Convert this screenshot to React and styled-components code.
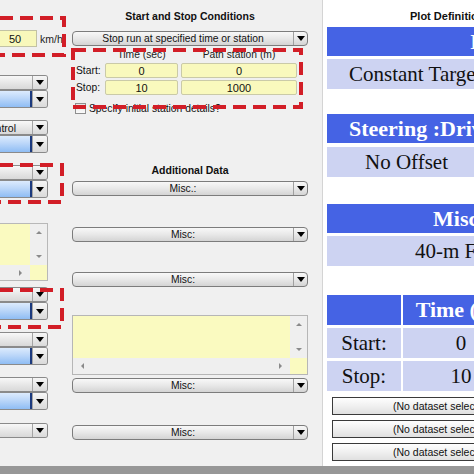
import React from "react";
import styled, { createGlobalStyle } from "styled-components";

const Global = createGlobalStyle`
  html, body { margin: 0; padding: 0; background: #f0f0f0; overflow: hidden; }
  #root { width: 474px; height: 474px; }
`;

const Page = styled.div`
  position: relative;
  width: 474px;
  height: 474px;
  overflow: hidden;
  background: #f0f0f0;
  font-family: "Liberation Sans", Arial, sans-serif;
  font-size: 10px;
  color: #111;
  display: grid;
  grid-template-columns: 72px 250px 152px;
  grid-template-rows: 466px 8px;
`;

const BottomBar = styled.div`
  grid-column: 1 / -1;
  background: #979797;
`;

/* ---------- shared bits ---------- */
const DownArrow = styled.span`
  width: 0;
  height: 0;
  border-left: 4.5px solid transparent;
  border-right: 4.5px solid transparent;
  border-top: 5px solid #000;
`;

const ScrollArrow = styled.span`
  width: 0;
  height: 0;
  border: 3px solid transparent;
  ${(p) =>
    p.$dir === "up"
      ? "border-bottom-color:#8a8a8a; border-top-width:0;"
      : p.$dir === "down"
      ? "border-top-color:#8a8a8a; border-bottom-width:0;"
      : p.$dir === "left"
      ? "border-right-color:#8a8a8a; border-left-width:0;"
      : "border-left-color:#8a8a8a; border-right-width:0;"}
`;

/* ---------- left column ---------- */
const LeftCol = styled.div`
  display: flex;
  flex-direction: column;
  padding-top: 30px;
`;

const SpeedRow = styled.div`
  display: flex;
  align-items: center;
  gap: 3px;
  height: 17px;
`;

const SpeedInput = styled.div`
  width: 37px;
  height: 17px;
  box-sizing: border-box;
  background: #f8f8bb;
  border: 1px solid #c2c2a4;
  border-left: none;
  display: flex;
  align-items: center;
  justify-content: center;
  padding-right: 6px;
  font-size: 11px;
`;

const Unit = styled.span`
  font-size: 10.5px;
  color: #222;
`;

const Pair = styled.div`
  display: flex;
  flex-direction: column;
  margin-top: ${(p) => p.$mt}px;
`;

const Combo = styled.div`
  display: flex;
  width: 48px;
  height: ${(p) => p.$h}px;
  box-sizing: border-box;
  border: 1px solid #8a8a8a;
  border-left: none;
  border-radius: 0 3px 3px 0;
  background: linear-gradient(#f8f8f8, #e6e6e6 55%, #d8d8d8);
  overflow: hidden;
`;

const ComboText = styled.div`
  flex: 1;
  min-width: 0;
  display: flex;
  align-items: center;
  justify-content: flex-end;
  padding-right: 16px;
  white-space: nowrap;
  overflow: hidden;
  font-size: 10.5px;
  ${(p) =>
    p.$blue
      ? "background: linear-gradient(#dcebfd, #bcd7f9 45%, #8fbdf4); border-right: 2px solid #1c3a7e;"
      : ""}
`;

const ComboButton = styled.div`
  width: 14px;
  flex: none;
  display: flex;
  align-items: center;
  justify-content: center;
  border-left: 1px solid #a4a4a4;
  background: linear-gradient(#f6f6f6, #dadada);
`;

const LeftText = styled.div`
  margin-top: 25px;
  width: 48px;
  height: 58px;
  box-sizing: border-box;
  border: 1px solid #b8b8b8;
  border-left: none;
  display: grid;
  grid-template-columns: 30px 1fr;
  grid-template-rows: 1fr 15px;
  background: #fafac0;
`;

const YellowCell = styled.div`
  background: #fafac0;
`;

const VScroll = styled.div`
  background: #efefef;
  display: flex;
  flex-direction: column;
  align-items: center;
  justify-content: space-between;
  padding: 7px 0;
`;

const HScroll = styled.div`
  background: #efefef;
  display: flex;
  align-items: center;
  justify-content: ${(p) => p.$justify || "space-between"};
  padding: 0 8px;
`;

/* ---------- middle column ---------- */
const MidCol = styled.div`
  display: flex;
  flex-direction: column;
  padding-right: 14px;
`;

const SectionTitle = styled.div`
  font-weight: bold;
  font-size: 10.5px;
  text-align: center;
  height: 12px;
  line-height: 12px;
  margin-top: ${(p) => p.$mt}px;
`;

const Dropdown = styled.div`
  display: flex;
  height: 15px;
  box-sizing: border-box;
  margin-top: ${(p) => p.$mt}px;
  border: 1px solid #7c7c7c;
  border-radius: 4px;
  background: linear-gradient(#f8f8f8, #e8e8e8 50%, #d4d4d4);
  overflow: hidden;
`;

const DropLabel = styled.div`
  flex: 1;
  display: flex;
  align-items: center;
  justify-content: center;
  font-size: 10.3px;
  white-space: nowrap;
`;

const DropButton = styled.div`
  width: 13px;
  flex: none;
  display: flex;
  align-items: center;
  justify-content: center;
  border-left: 1px solid #a0a0a0;
`;

const CondGrid = styled.div`
  margin-top: 3px;
  margin-left: 1px;
  display: grid;
  grid-template-columns: 29px 73px 116px;
  grid-template-rows: 12px 15px 15px;
  column-gap: 3px;
  row-gap: 2px;
  font-size: 10.3px;
`;

const ColHead = styled.div`
  text-align: center;
  line-height: 12px;
  color: #222;
`;

const RowLabel = styled.div`
  display: flex;
  align-items: center;
  padding-left: 3px;
`;

const ValueCell = styled.div`
  background: #f9f9bd;
  border: 1px solid #cacaa8;
  border-radius: 2px;
  display: flex;
  align-items: center;
  justify-content: center;
  font-size: 11px;
`;

const CheckRow = styled.label`
  margin-top: 8px;
  margin-left: 3px;
  height: 11px;
  display: flex;
  align-items: center;
  gap: 3px;
  font-size: 10.3px;
`;

const CheckBox = styled.span`
  width: 11px;
  height: 11px;
  box-sizing: border-box;
  border: 1px solid #8f8f8f;
  background: linear-gradient(#e4e4e4, #fafafa);
`;

const MidText = styled.div`
  margin-top: 28px;
  height: 60px;
  box-sizing: border-box;
  border: 1px solid #b6b6b6;
  display: grid;
  grid-template-columns: 1fr 17px;
  grid-template-rows: 1fr 16px;
  background: #fff;
`;

/* ---------- right panel ---------- */
const RightPanel = styled.div`
  background: #fff;
  border-left: 1px solid #d4d4d4;
  padding-left: 4px;
  overflow: hidden;
  display: flex;
  flex-direction: column;
`;

const PlotTitle = styled.div`
  margin-top: 10px;
  height: 12px;
  line-height: 12px;
  padding-left: 83px;
  font-weight: bold;
  font-size: 11px;
  white-space: nowrap;
`;

const Bar = styled.div`
  flex: none;
  width: 420px;
  height: ${(p) => p.$h}px;
  margin-top: ${(p) => p.$mt}px;
  box-sizing: border-box;
  padding-left: ${(p) => p.$indent}px;
  display: flex;
  align-items: center;
  white-space: nowrap;
  font-family: "Liberation Serif", "Times New Roman", serif;
  font-size: ${(p) => (p.$head ? 22 : 21)}px;
  background: ${(p) => (p.$head ? "#4563e4" : "#cdd3f2")};
  color: ${(p) => (p.$head ? "#fff" : "#111")};
  font-weight: ${(p) => (p.$head ? "bold" : "normal")};
`;

const TimeTable = styled.div`
  flex: none;
  width: 420px;
  margin-top: 29px;
  display: grid;
  grid-template-columns: 74px 116px 200px;
  grid-auto-rows: 30px;
  column-gap: 2px;
  row-gap: 3px;
  font-family: "Liberation Serif", "Times New Roman", serif;
  font-size: 21px;
`;

const TCell = styled.div`
  display: flex;
  align-items: center;
  justify-content: center;
  white-space: nowrap;
  background: ${(p) => (p.$head ? "#4563e4" : "#cdd3f2")};
  color: ${(p) => (p.$head ? "#fff" : "#111")};
  font-weight: ${(p) => (p.$head ? "bold" : "normal")};
  font-size: ${(p) => (p.$head ? 22 : 21)}px;
  padding-left: ${(p) => (p.$head ? 6 : 0)}px;
`;

const DataButton = styled.div`
  flex: none;
  width: 420px;
  height: 18px;
  margin-left: 5px;
  margin-top: ${(p) => p.$mt}px;
  box-sizing: border-box;
  border: 1px solid #3a3a3a;
  background: linear-gradient(#fefefe, #f0f0f0 50%, #e0e0e0);
  display: flex;
  align-items: center;
  padding-left: 60px;
  font-size: 10.5px;
  white-space: nowrap;
`;

/* ---------- overlay ---------- */
const Overlay = styled.svg`
  position: absolute;
  left: 0;
  top: 0;
  pointer-events: none;
`;

const LeftCombo = ({ blue, label = "" }) => (
  <Combo $h={blue ? 18 : 15}>
    <ComboText $blue={blue}>{label}</ComboText>
    <ComboButton>
      <DownArrow />
    </ComboButton>
  </Combo>
);

const ComboPair = ({ mt, label }) => (
  <Pair $mt={mt}>
    <LeftCombo label={label} />
    <LeftCombo blue />
  </Pair>
);

const MidDrop = ({ mt, children }) => (
  <Dropdown $mt={mt}>
    <DropLabel>{children}</DropLabel>
    <DropButton>
      <DownArrow />
    </DropButton>
  </Dropdown>
);

export default function App() {
  return (
    <Page>
      <Global />
      <LeftCol>
        <SpeedRow>
          <SpeedInput>50</SpeedInput>
          <Unit>km/h</Unit>
        </SpeedRow>
        <ComboPair mt={28} />
        <ComboPair mt={12} label="Speed control" />
        <ComboPair mt={12} />
        <LeftText>
          <YellowCell />
          <VScroll>
            <ScrollArrow $dir="up" />
            <ScrollArrow $dir="down" />
          </VScroll>
          <HScroll $justify="flex-end">
            <ScrollArrow $dir="right" />
          </HScroll>
          <YellowCell />
        </LeftText>
        <ComboPair mt={6} />
        <ComboPair mt={12} />
        <ComboPair mt={12} />
        <Pair $mt={13}>
          <LeftCombo />
        </Pair>
      </LeftCol>

      <MidCol>
        <SectionTitle $mt={10}>Start and Stop Conditions</SectionTitle>
        <MidDrop mt={9}>Stop run at specified time or station</MidDrop>
        <CondGrid>
          <span />
          <ColHead>Time (sec)</ColHead>
          <ColHead>Path station (m)</ColHead>
          <RowLabel>Start:</RowLabel>
          <ValueCell>0</ValueCell>
          <ValueCell>0</ValueCell>
          <RowLabel>Stop:</RowLabel>
          <ValueCell>10</ValueCell>
          <ValueCell>1000</ValueCell>
        </CondGrid>
        <CheckRow>
          <CheckBox />
          Specify initial station details?
        </CheckRow>
        <SectionTitle $mt={50}>Additional Data</SectionTitle>
        <MidDrop mt={5}>Misc.:</MidDrop>
        <MidDrop mt={31}>Misc:</MidDrop>
        <MidDrop mt={30}>Misc:</MidDrop>
        <MidText>
          <YellowCell />
          <VScroll>
            <ScrollArrow $dir="up" />
            <ScrollArrow $dir="down" />
          </VScroll>
          <HScroll>
            <ScrollArrow $dir="left" />
            <ScrollArrow $dir="right" />
          </HScroll>
          <YellowCell />
        </MidText>
        <MidDrop mt={3}>Misc:</MidDrop>
        <MidDrop mt={32}>Misc:</MidDrop>
      </MidCol>

      <RightPanel>
        <PlotTitle>Plot Definitions</PlotTitle>
        <Bar $head $h={29} $mt={5} $indent={143}>Inputs</Bar>
        <Bar $h={30} $mt={3} $indent={22}>Constant Target Speed</Bar>
        <Bar $head $h={29} $mt={25} $indent={22}>Steering :Driver Model</Bar>
        <Bar $h={30} $mt={4} $indent={38}>No Offset</Bar>
        <Bar $head $h={29} $mt={27} $indent={106}>Miscellaneous</Bar>
        <Bar $h={30} $mt={3} $indent={88}>40-m Flat Road</Bar>
        <TimeTable>
          <TCell $head />
          <TCell $head>Time (sec)</TCell>
          <TCell $head>Station (m)</TCell>
          <TCell>Start:</TCell>
          <TCell>0</TCell>
          <TCell>0</TCell>
          <TCell>Stop:</TCell>
          <TCell>10</TCell>
          <TCell>1000</TCell>
        </TimeTable>
        <DataButton $mt={6}>(No dataset selected)</DataButton>
        <DataButton $mt={5}>(No dataset selected)</DataButton>
        <DataButton $mt={5}>(No dataset selected)</DataButton>
      </RightPanel>

      <BottomBar />

      <Overlay width="474" height="474" viewBox="0 0 474 474">
        <g fill="none" stroke="#d21e27" strokeWidth="4" strokeDasharray="13 7">
          <path d="M0 18 H64 V55 H0" />
          <path d="M73 50 H301 V107 H73 Z" />
          <path d="M0 165 H62 V202 H0" />
          <path d="M0 290 H62 V327 H0" />
        </g>
      </Overlay>
    </Page>
  );
}
